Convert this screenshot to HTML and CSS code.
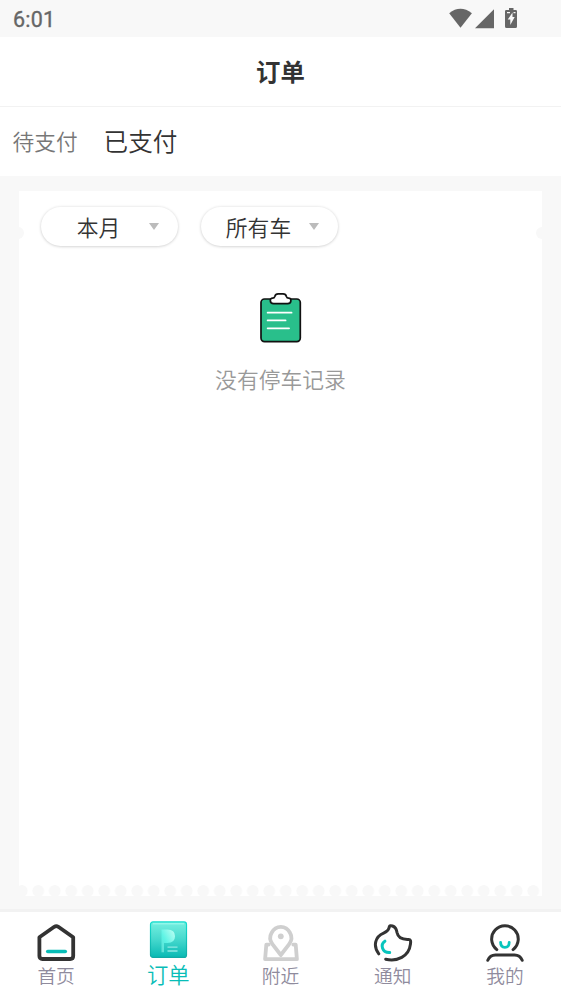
FILE: index.html
```html
<!DOCTYPE html>
<html lang="zh-CN">
<head>
<meta charset="utf-8">
<title>订单</title>
<link rel="stylesheet" href="styles.css">
</head>
<body>
<div class="app">
  <div class="status">
    <span class="clock">6:01</span>
    <svg class="signals" width="72" height="24" viewBox="0 0 72 24" fill="#666">
      <path d="M1.200 6.300Q12.300-2.600 23.900 6.300L12.500 20.700Z"/>
      <path d="M27 21.200 46 2.200V21.200Z"/>
      <path d="M61 1h4.500V3h2.200q1.300 0 1.300 1.300v15.200q0 1.500-1.500 1.500h-9q-1.500 0-1.500-1.500V4.300q0-1.300 1.300-1.300h2.700Z"/>
      <path d="M64.500 5.600 59.700 12.600h2.600v5.400l4.400-7.900h-2.200Z" fill="#f8f8f8"/>
      <path d="M59 5.600h3M65.500 5.600h2" stroke="#f8f8f8" stroke-width="1.200"/>
    </svg>
  </div>
  <header class="title">订单</header>
  <div class="tabs"><span class="tab">待支付</span><span class="tab active">已支付</span></div>
  <main class="content">
    <section class="ticket">
      <i class="notch left"></i><i class="notch right"></i>
      <div class="filters">
        <div class="pill"><span>本月</span><i class="arrow"></i></div>
        <div class="pill"><span>所有车</span><i class="arrow"></i></div>
      </div>
      <div class="empty">
        <svg width="42" height="50" viewBox="0 0 42 50" fill="none">
          <rect x="1" y="6" width="39.300" height="42.600" rx="3.500" fill="#29bf8b" stroke="#111" stroke-width="1.700"/>
          <path d="M10.300 7.500q0-2.300 2.300-2.300 1.700 0 2.200-1.700.7-2.600 3.300-2.600h5q2.700 0 3.300 2.600.5 1.700 2.200 1.700 2.300 0 2.300 2.300 0 3.100-3.300 3.100H13.600q-3.300 0-3.300-3.100Z" fill="#fff" stroke="#111" stroke-width="1.700"/>
          <path d="M7.600 19.700h24M7.600 27.400h18M7.600 35.300h21.500" stroke="#fff" stroke-width="1.700" stroke-linecap="round"/>
        </svg>
        <p>没有停车记录</p>
      </div>
      <div class="perforation"></div>
    </section>
  </main>
  <nav class="bar">
    <a class="item">
      <svg width="40" height="40" viewBox="0 0 40 40" fill="none">
        <path d="M3.400 15.300 18.300 4.800q2-1.300 4 0l14.900 10.500V34q0 3-3 3H6.400q-3 0-3-3Z" stroke="#333" stroke-width="3.800" stroke-linejoin="round"/>
        <path d="M11.700 29.500h17.600" stroke="#08bdb7" stroke-width="3.500" stroke-linecap="round"/>
      </svg><span>首页</span>
    </a>
    <a class="item current">
      <svg width="40" height="40" viewBox="0 0 40 40" fill="none">
        <defs>
          <linearGradient id="tile" x1="0" y1="0" x2="0" y2="1"><stop stop-color="#75f0e0"/><stop offset=".5" stop-color="#45d8cd"/><stop offset="1" stop-color="#08b9b3"/></linearGradient>
          <linearGradient id="edge" x1="0" y1="0" x2="0" y2="1"><stop stop-color="#13ddce"/><stop offset="1" stop-color="#12aaa5"/></linearGradient>
          <linearGradient id="letter" x1="1" y1="0" x2="0" y2="1"><stop stop-color="#c2fff4"/><stop offset=".6" stop-color="#5cf3e4"/><stop offset="1" stop-color="#60ddd4"/></linearGradient>
        </defs>
        <rect x="2.500" y="1.900" width="36" height="35.500" rx="2.500" fill="url(#tile)" stroke="url(#edge)" stroke-width="1.200"/>
        <path d="M5 3.800h31" stroke="#a2faee" stroke-width="1"/>
        <path d="M13.500 9.500h5.800q7.700 0 7.700 6.700t-7.700 6.700h-3.300v9.400h-2.500Z" fill="url(#letter)"/>
        <path d="M19.500 27.200h10M19.500 31h10" stroke="#8fe9e3" stroke-width="1.300"/>
      </svg><span>订单</span>
    </a>
    <a class="item">
      <svg width="40" height="40" viewBox="0 0 40 40" fill="none" stroke="#cfcfcf" stroke-width="3.800" stroke-linecap="round" stroke-linejoin="round">
        <path d="M19.800 33 11.600 22.300Q7.300 16.500 10.500 11 13.800 4.900 19.800 4.900t9.300 6.100q3.200 5.500-1.100 11.300Z"/>
        <path d="M7.700 22.600H5.300L4.100 37.200h31.800L34.700 22.600h-2.400"/>
        <circle cx="19.800" cy="14.300" r="2.900" fill="#cfcfcf" stroke="none"/>
      </svg><span>附近</span>
    </a>
    <a class="item">
      <svg width="40" height="40" viewBox="0 0 40 40" fill="none" stroke-linecap="round">
        <path d="M5.800 31.800C-.5 23.500 2.500 14.500 10.600 11.100Q16 8.800 16.300 4.700 16.600 3 19.500 4 23.300 5.300 24 10.500C25 15.500 29 17.700 35.500 17.400 37.500 17.300 38 19 37.400 22.400 36 34.500 24 40 12.700 37.200" stroke="#333" stroke-width="3" stroke-linejoin="round"/>
        <path d="M11.900 19.200C7 22.500 9 31 16.700 30.600" stroke="#08c5bd" stroke-width="3"/>
      </svg><span>通知</span>
    </a>
    <a class="item">
      <svg width="40" height="40" viewBox="0 0 40 40" fill="none" stroke-linecap="round">
        <path d="M11.800 27.600A13.300 13.300 0 1 1 28.100 27.600M2.800 38.300Q5 32.900 10.500 32.900h19q5.500 0 7.700 5.400" stroke="#333" stroke-width="3"/>
        <path d="M15.600 20.300q0 5 4.300 5t4.300-5" stroke="#08c5bd" stroke-width="2.800"/>
      </svg><span>我的</span>
    </a>
  </nav>
</div>
</body>
</html>
```
FILE: styles.css
```css
* { box-sizing: border-box; }
body {
  margin: 0;
  background: #f8f8f8;
  color: #333;
  font-family: "Noto Sans CJK SC", sans-serif;
  font-weight: 350;
}
.app { display: flex; flex-direction: column; height: 999px; overflow: hidden; }
svg { display: block; flex: none; }
.status {
  display: flex;
  justify-content: space-between;
  flex: 0 0 37px;
  padding: 7px 41px 0 13px;
}
.clock { font: 400 21.5px/26px Roboto, sans-serif; color: #666; letter-spacing: .2px; -webkit-text-stroke: .35px #666; }
.title {
  flex: 0 0 70px;
  background: #fff;
  border-bottom: 1px solid #f2f2f2;
  text-align: center;
  font-size: 24.4px;
  font-weight: 700;
  line-height: 68px;
}
.tabs { display: flex; flex: 0 0 69px; gap: 26px; padding-left: 12.500px; background: #fff; line-height: 67px; }
.tab { font-size: 21.7px; color: #777; }
.tab.active { font-size: 24.6px; color: #333; }
.content { flex: 1; padding: 15px 19px 0; }
.ticket { position: relative; display: flex; flex-direction: column; height: 705px; padding-top: 16px; background: #fff; overflow: hidden; }
.notch { position: absolute; top: 36px; width: 12px; height: 12px; border-radius: 50%; background: #f8f8f8; }
.notch.left { left: -7px; }
.notch.right { right: -6px; }
.filters { display: flex; gap: 23px; padding-left: 21.500px; }
.pill {
  display: flex;
  align-items: center;
  width: 137px;
  height: 39px;
  border-radius: 20px;
  padding: 0 18px 0 8px;
  box-shadow: 0 .5px 3px rgba(0, 0, 0, .22);
  font-size: 21.8px;
}
.pill span { flex: 1; margin-top: -1px; text-align: center; }
.arrow { margin-right: 1px; border: 5.5px solid transparent; border-top: 7px solid #bbb; border-bottom: 0; }
.empty { display: flex; flex-direction: column; align-items: center; padding-top: 47px; }
.empty p { margin: 19px 0 0; font-size: 21.8px; line-height: 34px; color: #999; }
.perforation {
  height: 12px;
  margin-top: auto;
  background: radial-gradient(circle at 8.230px 7px, #f8f8f8 5.500px, transparent 6.200px) -5.500px 0 / 16.500px 13px repeat-x;
}
.bar { display: flex; flex: 0 0 90px; padding-top: 10px; border-top: 3px solid #f2f2f2; background: #fff; }
.item { display: flex; flex: 1; flex-direction: column; align-items: center; font-size: 18.7px; line-height: 26px; color: #8f8b9d; }
.item.current { margin-top: -2px; color: #08bdb7; font-size: 21.3px; line-height: 28px; }
```
